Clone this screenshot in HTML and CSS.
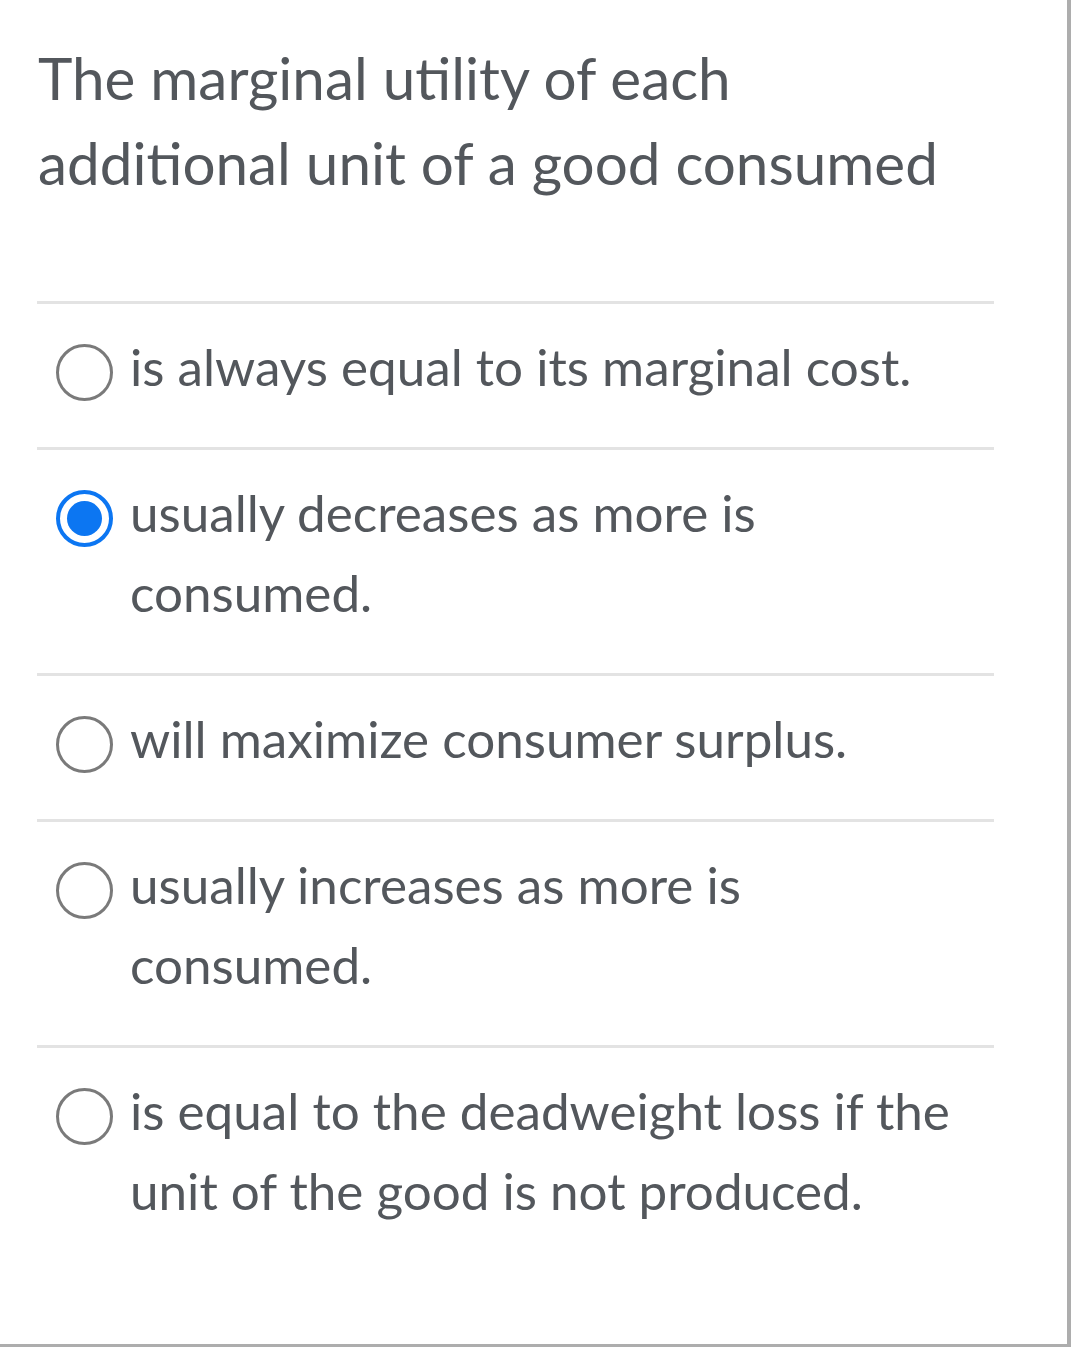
FILE: index.html
```html
<!DOCTYPE html>
<html>
<head>
<meta charset="utf-8">
<link rel="stylesheet" href="styles.css">
</head>
<body>
<div class="frame">
  <div class="question">The marginal utility of each additional unit of a good consumed</div>
  <div class="options">
    <div class="option">
      <span class="radio"></span>
      <span class="label">is always equal to its marginal cost.</span>
    </div>
    <div class="option">
      <span class="radio checked"></span>
      <span class="label">usually decreases as more is consumed.</span>
    </div>
    <div class="option">
      <span class="radio"></span>
      <span class="label">will maximize consumer surplus.</span>
    </div>
    <div class="option">
      <span class="radio"></span>
      <span class="label">usually increases as more is consumed.</span>
    </div>
    <div class="option">
      <span class="radio"></span>
      <span class="label">is equal to the deadweight loss if the unit of the good is not produced.</span>
    </div>
  </div>
</div>
</body>
</html>
```
FILE: styles.css
```css
html, body {
  margin: 0;
  padding: 0;
  background: #ffffff;
}
body {
  font-family: Lato, "Open Sans", sans-serif;
  color: #53575c;
}
.frame {
  width: 1067px;
  height: 1344px;
  box-sizing: content-box;
  border-right: 4px solid #adadad;
  border-bottom: 3px solid #adadad;
  background: #fff;
}
.question {
  padding: 35px 100px 0 38px;
  font-size: 58.4px;
  line-height: 85px;
  height: 266px;
  box-sizing: content-box;
}
.options {
  margin-left: 37px;
  width: 957px;
  border-top: 3px solid #e3e3e3;
}
.option {
  display: flex;
  align-items: flex-start;
  gap: 17px;
  padding: 22px 40px 41px 19px;
  border-bottom: 3px solid #e3e3e3;
}
.option:last-child {
  border-bottom: none;
}
.radio {
  flex: none;
  width: 51px;
  height: 51px;
  border: 3px solid #7a7a7a;
  border-radius: 50%;
  margin-top: 18px;
  box-sizing: content-box;
  position: relative;
}
.radio.checked {
  border: 4px solid #0c76f2;
  width: 49px;
  height: 49px;
}
.radio.checked::after {
  content: "";
  position: absolute;
  left: 7px;
  top: 7px;
  width: 35px;
  height: 35px;
  border-radius: 50%;
  background: #0c76f2;
}
.label {
  font-size: 51.2px;
  line-height: 80px;
}
```
